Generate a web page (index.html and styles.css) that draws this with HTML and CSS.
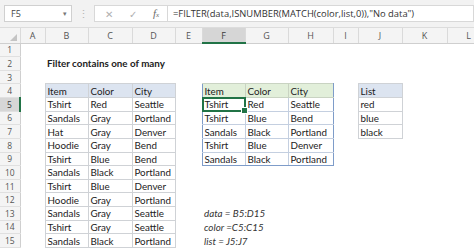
FILE: index.html
```html
<!doctype html>
<html lang="en">
  <head>
    <meta charset="UTF-8" />
    <meta name="viewport" content="width=device-width, initial-scale=1.0" />
    <title>Filter contains one of many</title>
    <link rel="stylesheet" href="styles.css">
  </head>
  <body>
    <div class="formula-bar">
      <div class="name-box">
        <span>F5</span>
        <span class="name-arrow">&#9662;</span>
      </div>
      <div class="grip">&#8942;</div>
      <div class="fx-box">
        <span class="fx-icon cancel">&#10005;</span>
        <span class="fx-icon enter">&#10003;</span>
        <span class="fx-icon fx"><i>f</i><small>x</small></span>
      </div>
      <div class="formula">=FILTER(data,ISNUMBER(MATCH(color,list,0)),"No data")</div>
    </div>

    <div class="sheet-wrap">
      <table class="sheet">
        <colgroup>
          <col class="w-hdr"><col class="w-a"><col class="w-b"><col class="w-c"><col class="w-d">
          <col class="w-e"><col class="w-f"><col class="w-g"><col class="w-h"><col class="w-i">
          <col class="w-j"><col class="w-k"><col class="w-l">
        </colgroup>
        <thead>
          <tr class="col-heads">
            <th class="corner"><span class="corner-tri"></span></th>
            <th>A</th><th>B</th><th>C</th><th>D</th><th>E</th>
            <th class="sel">F</th><th>G</th><th>H</th><th>I</th><th>J</th><th>K</th><th>L</th>
          </tr>
        </thead>
        <tbody>
          <tr>
            <th class="row-head">1</th>
            <td></td><td></td><td></td><td></td><td></td><td></td><td></td><td></td><td></td><td></td><td></td><td></td>
          </tr>
          <tr>
            <th class="row-head">2</th>
            <td></td><td class="title">Filter contains one of many</td><td></td><td></td><td></td><td></td><td></td><td></td><td></td><td></td><td></td><td></td>
          </tr>
          <tr>
            <th class="row-head">3</th>
            <td></td><td></td><td></td><td></td><td></td><td></td><td></td><td></td><td></td><td></td><td></td><td></td>
          </tr>
          <tr>
            <th class="row-head">4</th>
            <td></td>
            <td class="data head">Item</td><td class="data head">Color</td><td class="data head">City</td>
            <td></td>
            <td class="out head first">Item</td><td class="out head">Color</td><td class="out head last">City</td>
            <td></td>
            <td class="data head">List</td>
            <td></td><td></td>
          </tr>
          <tr>
            <th class="row-head sel">5</th>
            <td></td>
            <td class="data">Tshirt</td><td class="data">Red</td><td class="data">Seattle</td>
            <td></td>
            <td class="out first active">Tshirt<span class="cursor"></span></td><td class="out">Red</td><td class="out last">Seattle</td>
            <td></td>
            <td class="data">red</td>
            <td></td><td></td>
          </tr>
          <tr>
            <th class="row-head">6</th>
            <td></td>
            <td class="data">Sandals</td><td class="data">Gray</td><td class="data">Portland</td>
            <td></td>
            <td class="out first">Tshirt</td><td class="out">Blue</td><td class="out last">Bend</td>
            <td></td>
            <td class="data">blue</td>
            <td></td><td></td>
          </tr>
          <tr>
            <th class="row-head">7</th>
            <td></td>
            <td class="data">Hat</td><td class="data">Gray</td><td class="data">Denver</td>
            <td></td>
            <td class="out first">Sandals</td><td class="out">Black</td><td class="out last">Portland</td>
            <td></td>
            <td class="data">black</td>
            <td></td><td></td>
          </tr>
          <tr>
            <th class="row-head">8</th>
            <td></td>
            <td class="data">Hoodie</td><td class="data">Gray</td><td class="data">Bend</td>
            <td></td>
            <td class="out first">Tshirt</td><td class="out">Blue</td><td class="out last">Denver</td>
            <td></td><td></td><td></td><td></td>
          </tr>
          <tr>
            <th class="row-head">9</th>
            <td></td>
            <td class="data">Tshirt</td><td class="data">Blue</td><td class="data">Bend</td>
            <td></td>
            <td class="out first bottom">Sandals</td><td class="out bottom">Black</td><td class="out last bottom">Portland</td>
            <td></td><td></td><td></td><td></td>
          </tr>
          <tr>
            <th class="row-head">10</th>
            <td></td>
            <td class="data">Sandals</td><td class="data">Black</td><td class="data">Portland</td>
            <td></td><td></td><td></td><td></td><td></td><td></td><td></td><td></td>
          </tr>
          <tr>
            <th class="row-head">11</th>
            <td></td>
            <td class="data">Tshirt</td><td class="data">Blue</td><td class="data">Denver</td>
            <td></td><td></td><td></td><td></td><td></td><td></td><td></td><td></td>
          </tr>
          <tr>
            <th class="row-head">12</th>
            <td></td>
            <td class="data">Hoodie</td><td class="data">Gray</td><td class="data">Portland</td>
            <td></td><td></td><td></td><td></td><td></td><td></td><td></td><td></td>
          </tr>
          <tr>
            <th class="row-head">13</th>
            <td></td>
            <td class="data">Sandals</td><td class="data">Gray</td><td class="data">Seattle</td>
            <td></td>
            <td class="note">data = B5:D15</td>
            <td></td><td></td><td></td><td></td><td></td><td></td>
          </tr>
          <tr>
            <th class="row-head">14</th>
            <td></td>
            <td class="data">Tshirt</td><td class="data">Gray</td><td class="data">Seattle</td>
            <td></td>
            <td class="note">color =C5:C15</td>
            <td></td><td></td><td></td><td></td><td></td><td></td>
          </tr>
          <tr>
            <th class="row-head">15</th>
            <td></td>
            <td class="data">Sandals</td><td class="data">Black</td><td class="data">Portland</td>
            <td></td>
            <td class="note">list = J5:J7</td>
            <td></td><td></td><td></td><td></td><td></td><td></td>
          </tr>
        </tbody>
      </table>
    </div>
  </body>
</html>
```

FILE: styles.css
```css
* {
  margin: 0;
  padding: 0;
  box-sizing: border-box;
}

html,
body {
  width: 474px;
  height: 248px;
  overflow: hidden;
  background: #ffffff;
}

body {
  font-family: Lato, 'Open Sans', sans-serif;
  color: #222222;
}

/* formula bar */
.formula-bar {
  height: 28px;
  display: flex;
  align-items: center;
  background: #f2f2f2;
  padding-left: 4px;
  border-bottom: 1px solid #dcdcdc;
}

.name-box {
  width: 68px;
  height: 17px;
  display: flex;
  align-items: center;
  justify-content: space-between;
  padding: 0 4px 0 6px;
  background: #ffffff;
  border: 1px solid #d0d0d0;
  font-family: 'Open Sans', sans-serif;
  font-size: 9px;
  color: #444444;
}

.name-arrow {
  font-size: 7px;
  color: #777777;
}

.grip {
  width: 22px;
  text-align: center;
  font-size: 11px;
  color: #b5b5b5;
}

.fx-box {
  width: 73px;
  height: 17px;
  display: flex;
  align-items: center;
  background: #ffffff;
  border: 1px solid #d8d8d8;
  border-right: none;
  padding-left: 10px;
  gap: 16px;
}

.fx-icon {
  font-size: 10px;
  color: #b0b0b0;
  line-height: 1;
}

.fx-icon.fx {
  color: #6a6a6a;
  font-family: 'Liberation Serif', serif;
  font-size: 11px;
}

.fx-icon.fx small {
  font-size: 7px;
  font-style: italic;
}

.formula {
  flex: 1;
  height: 17px;
  display: flex;
  align-items: center;
  background: #ffffff;
  border: 1px solid #d8d8d8;
  padding-left: 5px;
  font-family: 'Open Sans', sans-serif;
  font-size: 9.4px;
  color: #333333;
  white-space: nowrap;
}

/* sheet */
.sheet-wrap {
  width: 474px;
  overflow: hidden;
}

.sheet {
  table-layout: fixed;
  border-collapse: collapse;
  width: 490px;
  font-size: 9.8px;
}

.w-hdr { width: 20px; }
.w-a { width: 25px; }
.w-b { width: 43px; }
.w-c { width: 44px; }
.w-d { width: 43px; }
.w-e { width: 27px; }
.w-f { width: 43px; }
.w-g { width: 43px; }
.w-h { width: 45px; }
.w-i { width: 25px; }
.w-j { width: 44px; }
.w-k { width: 45px; }
.w-l { width: 43px; }

.col-heads th {
  height: 15px;
  background: #f4f4f4;
  border-right: 1px solid #dadada;
  border-bottom: 1px solid #cfcfcf;
  font-family: 'Open Sans', sans-serif;
  font-weight: normal;
  font-size: 9px;
  color: #555555;
  text-align: center;
}

.col-heads th.sel {
  background: #d6d6d6;
  border-bottom: 2px solid #217346;
  color: #3c3c3c;
}

.corner {
  position: relative;
}

.corner-tri {
  position: absolute;
  right: 3px;
  bottom: 2px;
  width: 0;
  height: 0;
  border-left: 7px solid transparent;
  border-bottom: 7px solid #c4c4c4;
}

tbody tr {
  height: 13.64px;
}

.row-head {
  background: #f4f4f4;
  border-right: 1px solid #cfcfcf;
  border-bottom: 1px solid #e0e0e0;
  font-family: 'Open Sans', sans-serif;
  font-weight: normal;
  font-size: 8.5px;
  color: #555555;
  text-align: center;
}

.row-head.sel {
  background: #d6d6d6;
  border-right: 2px solid #217346;
  color: #3c3c3c;
}

td {
  padding: 0 2px;
  white-space: nowrap;
  overflow: visible;
  line-height: 12px;
}

.title {
  font-weight: bold;
  font-size: 9.8px;
}

.data {
  border: 1px solid #cfd2d6;
}

.data.head {
  background: #dce4f0;
}

.out {
  border: 1px solid #c4cfe0;
}

.out.head {
  background: #e2efda;
  border-color: #c9d3c2;
}

.out.first {
  border-left-color: #7e9cc9;
}

.out.last {
  border-right-color: #7e9cc9;
}

.out.bottom {
  border-bottom-color: #7e9cc9;
}

.active {
  position: relative;
}

.cursor {
  position: absolute;
  left: -1px;
  top: -1px;
  right: -1px;
  bottom: -1px;
  border: 2px solid #217346;
}

.cursor::after {
  content: '';
  position: absolute;
  right: -4px;
  bottom: -4px;
  width: 5px;
  height: 5px;
  background: #217346;
  border: 1px solid #ffffff;
}

.note {
  font-style: italic;
  color: #333333;
}
```
